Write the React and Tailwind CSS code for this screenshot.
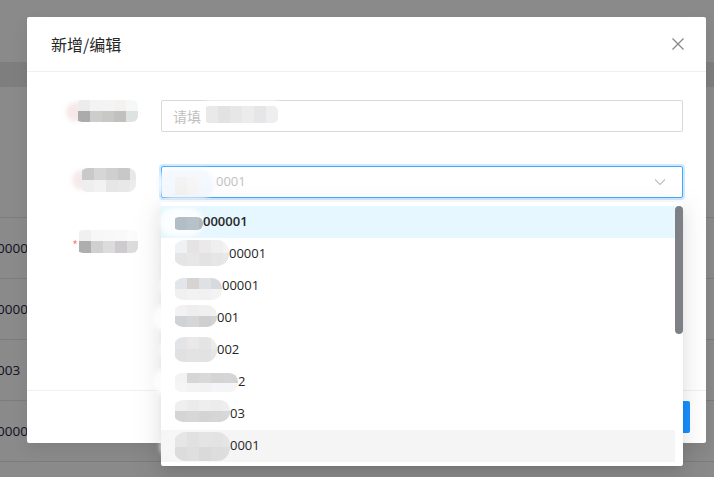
import React, { useId } from "react";

function Mosaic({ w, h = 32, mx, my, cw = 12, rows, halo = "#ffffff", haloX = 0, haloW, haloY = 2, haloH, rx, className = "" }) {
  const id = useId().replace(/:/g, "");
  const mh = rows.reduce((a, r) => a + r.h, 0);
  const mw = Math.max(...rows.map((r) => r.c.length)) * cw;
  const hw = haloW ?? w;
  const hh = haloH ?? h - 4;
  let y = my;
  return (
    <svg width={w} height={h} className={"shrink-0 overflow-visible " + className}>
      <defs>
        <filter id={"b" + id} x="-30%" y="-60%" width="160%" height="220%">
          <feGaussianBlur stdDeviation="2.2" />
        </filter>
        <filter id={"s" + id}>
          <feGaussianBlur stdDeviation="0.35" />
        </filter>
        <clipPath id={"c" + id}>
          <rect x={mx - 2} y={my} width={Math.min(mw, w - mx) + 2} height={mh} rx={rx ?? mh / 2.2} />
        </clipPath>
      </defs>
      <rect x={haloX} y={haloY} width={hw} height={hh} rx={hh / 2} fill={halo} opacity="0.85" filter={`url(#b${id})`} />
      <g clipPath={`url(#c${id})`} filter={`url(#s${id})`}>
        {rows.map((r, ri) => {
          const yy = y;
          y += r.h;
          return r.c.map((col, ci) => (
            <rect key={ri + "-" + ci} x={mx + ci * cw} y={yy} width={cw + 0.5} height={r.h + 0.5} fill={col} />
          ));
        })}
      </g>
    </svg>
  );
}

function CloseIcon() {
  return (
    <svg width="14" height="14" viewBox="0 0 14 14" className="block">
      <path d="M1.5 1.5 L12.5 12.5 M12.5 1.5 L1.5 12.5" stroke="#8c8c8c" strokeWidth="1.4" fill="none" />
    </svg>
  );
}

function ChevronDown() {
  return (
    <svg width="12" height="12" viewBox="0 0 12 12" className="block">
      <path d="M1 3.5 L6 8.5 L11 3.5" stroke="#bfbfbf" strokeWidth="1.1" fill="none" />
    </svg>
  );
}

const items = [
  {
    text: "000001", bold: true, active: true, w: 43, ml: "-ml-[13px]", mx: 15, my: 11,
    halo: "#ffffff",
    rows: [{ h: 13, c: ["#b2bec5", "#b6c1c8", "#aeb9c0"] }],
  },
  {
    text: "00001", w: 66, ml: "-ml-[10px]", mx: 12, my: 2,
    rows: [
      { h: 13, c: ["#eef2f5", "#e6e3e5", "#ebeaea", "#efefef", "#f3f3f3"] },
      { h: 13, c: ["#e5e5e5", "#e7e7e7", "#e3e3e3", "#e6e6e6", "#e8e8e8"] },
    ],
  },
  {
    text: "00001", w: 62, ml: "-ml-[13px]", mx: 15, my: 8,
    rows: [
      { h: 11, c: ["#e2e6ea", "#d7d3d2", "#dfe2e5", "#d6dadd"] },
      { h: 11, c: ["#f0f0f0", "#f2f2f2", "#f1f1f1", "#f3f3f3"] },
    ],
  },
  {
    text: "001", w: 64, ml: "-ml-[20px]", mx: 22, my: 3,
    rows: [
      { h: 11, c: ["#f2f2f2", "#eeeeee", "#f0f0f0", "#f1f1f1"] },
      { h: 11, c: ["#cfd2d6", "#d6d6d6", "#d0cfcf", "#d3d3d3"] },
    ],
  },
  {
    text: "002", w: 57, ml: "-ml-[13px]", mx: 15, my: 3,
    rows: [
      { h: 12, c: ["#e3e4e8", "#ebe8e9", "#e4e4e4", "#ececec"] },
      { h: 13, c: ["#e1e1e1", "#e3e3e3", "#e2e2e2", "#e6e6e6"] },
    ],
  },
  {
    text: "2", w: 85, ml: "-ml-[20px]", mx: 22, my: 7,
    rows: [
      { h: 10, c: ["#f3f3f3", "#d6d6d6", "#d9d9d9", "#d4d4d4", "#d5d5d5", "#d3d3d3"] },
      { h: 9, c: ["#f5f5f5", "#f3f3f3", "#f2f2f2", "#f4f5f6", "#f5f5f5", "#f6f6f6"] },
    ],
  },
  {
    text: "03", w: 65, ml: "-ml-[8px]", mx: 10, my: 2,
    rows: [
      { h: 11, c: ["#efefef", "#ebebeb", "#eeeeee", "#ececec", "#eeeeee"] },
      { h: 11, c: ["#d5d5d5", "#d7d7d7", "#d4d4d4", "#d6d6d6", "#d8d8d8"] },
    ],
  },
  {
    text: "0001", w: 70, ml: "-ml-[13px]", mx: 15, my: 2, hover: true,
    halo: "#f7f7f7",
    rows: [
      { h: 15, c: ["#e6e6e6", "#e1e1e1", "#e4e4e4", "#e3e3e3", "#e5e5e5"] },
      { h: 14, c: ["#dcdcdc", "#dfdfdf", "#dadada", "#dddddd", "#dedede"] },
    ],
  },
];

const bgRows = ["00002", "00001", "003", "00002"];

export default function App() {
  return (
    <div className="relative w-[714px] h-[477px] overflow-hidden bg-white font-['Noto_Sans_CJK_SC','Noto_Sans',sans-serif] text-[14px] text-[#262626]">
      {/* background page (table) */}
      <div className="flex flex-col">
        <div className="h-[62px]" />
        <div className="h-[25px] bg-[#e9e9e9]" />
        <div className="h-[131px] border-b border-[#e6e6e6]" />
        {bgRows.map((t, i) => (
          <div key={i} className="h-[61px] border-b border-[#e6e6e6] flex items-center">
            <span className="-ml-[3px] whitespace-nowrap font-['Open_Sans',sans-serif] text-[13.5px] text-[#1c2540]">{t}</span>
          </div>
        ))}
      </div>

      {/* mask */}
      <div className="absolute inset-0 bg-black/[0.46]" />

      {/* modal */}
      <div className="absolute left-[27px] top-[17px] w-[679px] h-[426px] bg-white rounded-[2px] shadow-[0_6px_16px_rgba(0,0,0,0.08)] flex flex-col">
        <div className="h-[55px] shrink-0 border-b border-[#f0f0f0] pl-[24px] pr-[21px] flex items-center justify-between">
          <span className="text-[16px] leading-[22px] text-[#262626]">新增/编辑</span>
          <CloseIcon />
        </div>

        <div className="flex-1 pt-[28px] pl-[24px] pr-[23px] flex flex-col gap-[34px]">
          {/* row 1 */}
          <div className="flex h-[32px]">
            <div className="w-[110px] pr-[23px] flex justify-end items-start">
              <Mosaic
                w={72}
                h={24}
                mx={12}
                my={0}
                halo="#f6e4e5"
                haloX={0}
                haloW={20}
                haloY={2}
                haloH={20}
                rx={6}
                rows={[
                  { h: 11, c: ["#ececec", "#f2f3f3", "#f4f4f4", "#f3f2f1", "#f6f8f8"] },
                  { h: 11, c: ["#ababab", "#cdcdcb", "#c8c8c6", "#c2c1bf", "#dde2e2"] },
                ]}
              />
            </div>
            <div className="relative flex-1 h-[32px] border border-[#d9d9d9] rounded-[2px] px-[11px] flex items-center">
              <span className="text-[#bfbfbf]">请填</span>
              <div className="absolute left-[38px] -top-[1px]">
                <Mosaic
                  w={84}
                  h={25}
                  mx={6}
                  my={6}
                  haloY={0}
                  haloH={24}
                  rx={5}
                  rows={[
                    { h: 17, c: ["#e9e9e9", "#e3e2e1", "#e7e7e7", "#ececec", "#e6e6e8", "#eeeeee"] },
                  ]}
                />
              </div>
            </div>
          </div>

          {/* row 2 */}
          <div className="flex h-[32px]">
            <div className="w-[110px] pr-[25px] flex justify-end items-start pt-[2px]">
              <Mosaic
                w={64}
                h={24}
                mx={10}
                my={0}
                halo="#f4e6e8"
                haloX={0}
                haloW={18}
                haloY={2}
                haloH={20}
                rx={8}
                rows={[
                  { h: 12, c: ["#c9c9c9", "#d6d6d6", "#cfcfcf", "#c8c8c8", "#e6e8ea"] },
                  { h: 12, c: ["#eeeeee", "#f2f2f2", "#e6e6e6", "#e8e8e8", "#ececec"] },
                ]}
              />
            </div>
            <div className="relative flex-1 h-[32px] border border-[#40a9ff] rounded-[2px] shadow-[0_0_0_2px_rgba(24,144,255,0.2)] pl-[54px] pr-[16px] flex items-center justify-between">
              <span className="text-[#bfbfbf] font-['Open_Sans',sans-serif] text-[13px]">0001</span>
              <ChevronDown />
              <div className="absolute -left-[5px] top-[1px]">
                <Mosaic
                  w={58}
                  h={32}
                  mx={18}
                  my={9}
                  halo="#f3f8ff"
                  haloY={1}
                  haloH={30}
                  rx={6}
                  rows={[{ h: 18, c: ["#f3f3f3", "#f6f6f6"] }]}
                />
              </div>
            </div>
          </div>

          {/* row 3 */}
          <div className="flex h-[32px]">
            <div className="w-[110px] pr-[23px] flex justify-end items-start">
              <div className="flex items-start -mt-[2px]">
                <span className="text-[#ff4d4f] text-[12px] leading-[12px] mt-[9px] mr-[-2px]">*</span>
                <Mosaic
                  w={62}
                  h={24}
                  mx={3}
                  my={0}
                  haloX={0}
                  haloW={62}
                  rx={6}
                  rows={[
                    { h: 11, c: ["#f0f0f0", "#f7f7f7", "#f8f8f8", "#f9f9f9", "#fbfbfb"] },
                    { h: 12, c: ["#aeaeae", "#d0d0d0", "#dcdcdc", "#cdcbcd", "#dcdcdc"] },
                  ]}
                />
              </div>
            </div>
            <div className="flex-1 h-[32px] border border-[#d9d9d9] rounded-[2px]" />
          </div>
        </div>

        <div className="h-[53px] shrink-0 border-t border-[#f0f0f0] px-[16px] py-[10px] flex justify-end gap-[8px]">
          <button className="h-[32px] px-[15px] border border-[#d9d9d9] rounded-[2px] bg-white text-[#262626]">取 消</button>
          <button className="h-[32px] px-[15px] rounded-[2px] bg-[#1890ff] text-white">确 定</button>
        </div>
      </div>

      {/* dropdown */}
      <div className="absolute left-[161px] top-[202px] w-[522px] h-[264px] bg-white rounded-[2px] shadow-[0_3px_6px_-4px_rgba(0,0,0,0.12),0_6px_16px_0_rgba(0,0,0,0.08),0_9px_28px_8px_rgba(0,0,0,0.05)] py-[4px] flex">
        <div className="flex-1 flex flex-col">
          {items.map((it, i) => (
            <div
              key={i}
              className={
                "h-[32px] px-[12px] flex items-center " +
                (it.active ? "bg-[#e6f7ff] " : it.hover ? "bg-[#f5f5f5] " : "")
              }
            >
              <Mosaic
                w={it.w}
                h={32}
                mx={it.mx}
                my={it.my}
                halo={it.halo || "#ffffff"}
                className={it.ml}
                rows={it.rows}
              />
              <span className={"font-['Open_Sans',sans-serif] text-[13px] " + (it.bold ? "font-semibold" : "")}>{it.text}</span>
            </div>
          ))}
        </div>
        <div className="w-[8px] flex flex-col">
          <div className="h-[128px] rounded-[4px] bg-[#7d8185]" />
        </div>
      </div>
    </div>
  );
}
